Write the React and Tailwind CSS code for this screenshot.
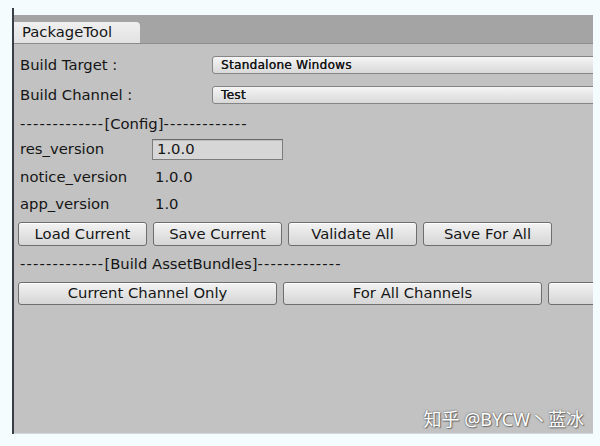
import React from 'react';

const btn =
  'shrink-0 flex items-center justify-center border border-[#6e6e6e] rounded-[3px] bg-gradient-to-b from-[#f3f3f3] to-[#d5d5d5] shadow-[inset_0_1px_0_#ffffff] text-[#151515] text-[14.8px] leading-none';

const drop =
  'w-[400px] h-[18px] shrink-0 flex items-center pl-[8px] border border-[#858585] rounded-[3px] bg-gradient-to-b from-[#f5f5f5] to-[#d9d9d9] text-[#151515] text-[12px] tracking-[0.3px] leading-none [text-shadow:0.3px_0_0_#151515]';

function Divider({ title, className }) {
  return (
    <div className={`h-[18px] pl-[2px] flex items-center text-[14.8px] text-[#151515] leading-none whitespace-nowrap ${className}`}>
      <span className="tracking-[1.15px]">-------------</span>
      <span>[{title}]</span>
      <span className="tracking-[1.15px]">-------------</span>
    </div>
  );
}

export default function App() {
  return (
    <div className="w-[600px] h-[446px] bg-[#f5fcfd] relative overflow-hidden font-['DejaVu_Sans',sans-serif]">
      <div className="pt-[8px] pl-[12px]">
        <div className="border-l-2 border-[#3a3f47] h-[426px] pt-[7px]">
          <div className="w-[579px] h-[419px] bg-[#c2c2c2] flex flex-col overflow-hidden border-b border-[#d2d9dc]">
            {/* Tab strip */}
            <div className="h-[29px] shrink-0 bg-[#a4a4a4] border-b border-[#8c8c8c] flex items-end">
              <div className="w-[126px] h-[21px] bg-gradient-to-b from-[#f0f0f0] to-[#e2e2e2] rounded-tr-[4px] flex items-center pl-[8px] text-[14.8px] text-[#151515] leading-none">
                PackageTool
              </div>
            </div>

            <div className="pl-[4px] flex flex-col">
              <div className="h-[18px] mt-[12px] flex items-center">
                <div className="w-[194px] shrink-0 pl-[2px] text-[14.8px] text-[#151515] leading-none">Build Target :</div>
                <div className={drop}>Standalone Windows</div>
              </div>
              <div className="h-[18px] mt-[12px] flex items-center">
                <div className="w-[194px] shrink-0 pl-[2px] text-[14.8px] text-[#151515] leading-none">Build Channel :</div>
                <div className={drop}>Test</div>
              </div>

              <Divider title="Config" className="mt-[11px]" />

              <div className="h-[21px] mt-[6px] flex items-center text-[14.8px] text-[#151515] leading-none">
                <div className="w-[134px] shrink-0 pl-[2px]">res_version</div>
                <div className="w-[131px] h-[21px] flex items-center pl-[4px] bg-[#d6d6d6] border border-[#7c7c7c] border-t-[#6a6a6a] shadow-[inset_0_1px_0_#bdbdbd]">
                  1.0.0
                </div>
              </div>
              <div className="h-[18px] mt-[8px] flex items-center text-[14.8px] text-[#151515] leading-none">
                <div className="w-[137px] shrink-0 pl-[2px]">notice_version</div>
                <div>1.0.0</div>
              </div>
              <div className="h-[18px] mt-[9px] flex items-center text-[14.8px] text-[#151515] leading-none">
                <div className="w-[137px] shrink-0 pl-[2px]">app_version</div>
                <div>1.0</div>
              </div>

              <div className="h-[24px] mt-[9px] flex gap-[6px]">
                <div className={`${btn} w-[129px]`}>Load Current</div>
                <div className={`${btn} w-[129px]`}>Save Current</div>
                <div className={`${btn} w-[129px]`}>Validate All</div>
                <div className={`${btn} w-[129px]`}>Save For All</div>
              </div>

              <Divider title="Build AssetBundles" className="mt-[9px]" />

              <div className="h-[23px] mt-[9px] flex gap-[6px]">
                <div className={`${btn} w-[259px]`}>Current Channel Only</div>
                <div className={`${btn} w-[259px]`}>For All Channels</div>
                <div className={`${btn} w-[259px]`}></div>
              </div>
            </div>
          </div>
        </div>
      </div>

      <div className="absolute right-[16px] top-[410px] text-[18px] leading-none text-white [text-shadow:0_0_2px_rgba(0,0,0,0.6),1px_1px_1px_rgba(0,0,0,0.35)] font-['Noto_Sans','Noto_Sans_CJK_SC',sans-serif] whitespace-nowrap">
        知乎 @BYCW丶蓝冰
      </div>
    </div>
  );
}
